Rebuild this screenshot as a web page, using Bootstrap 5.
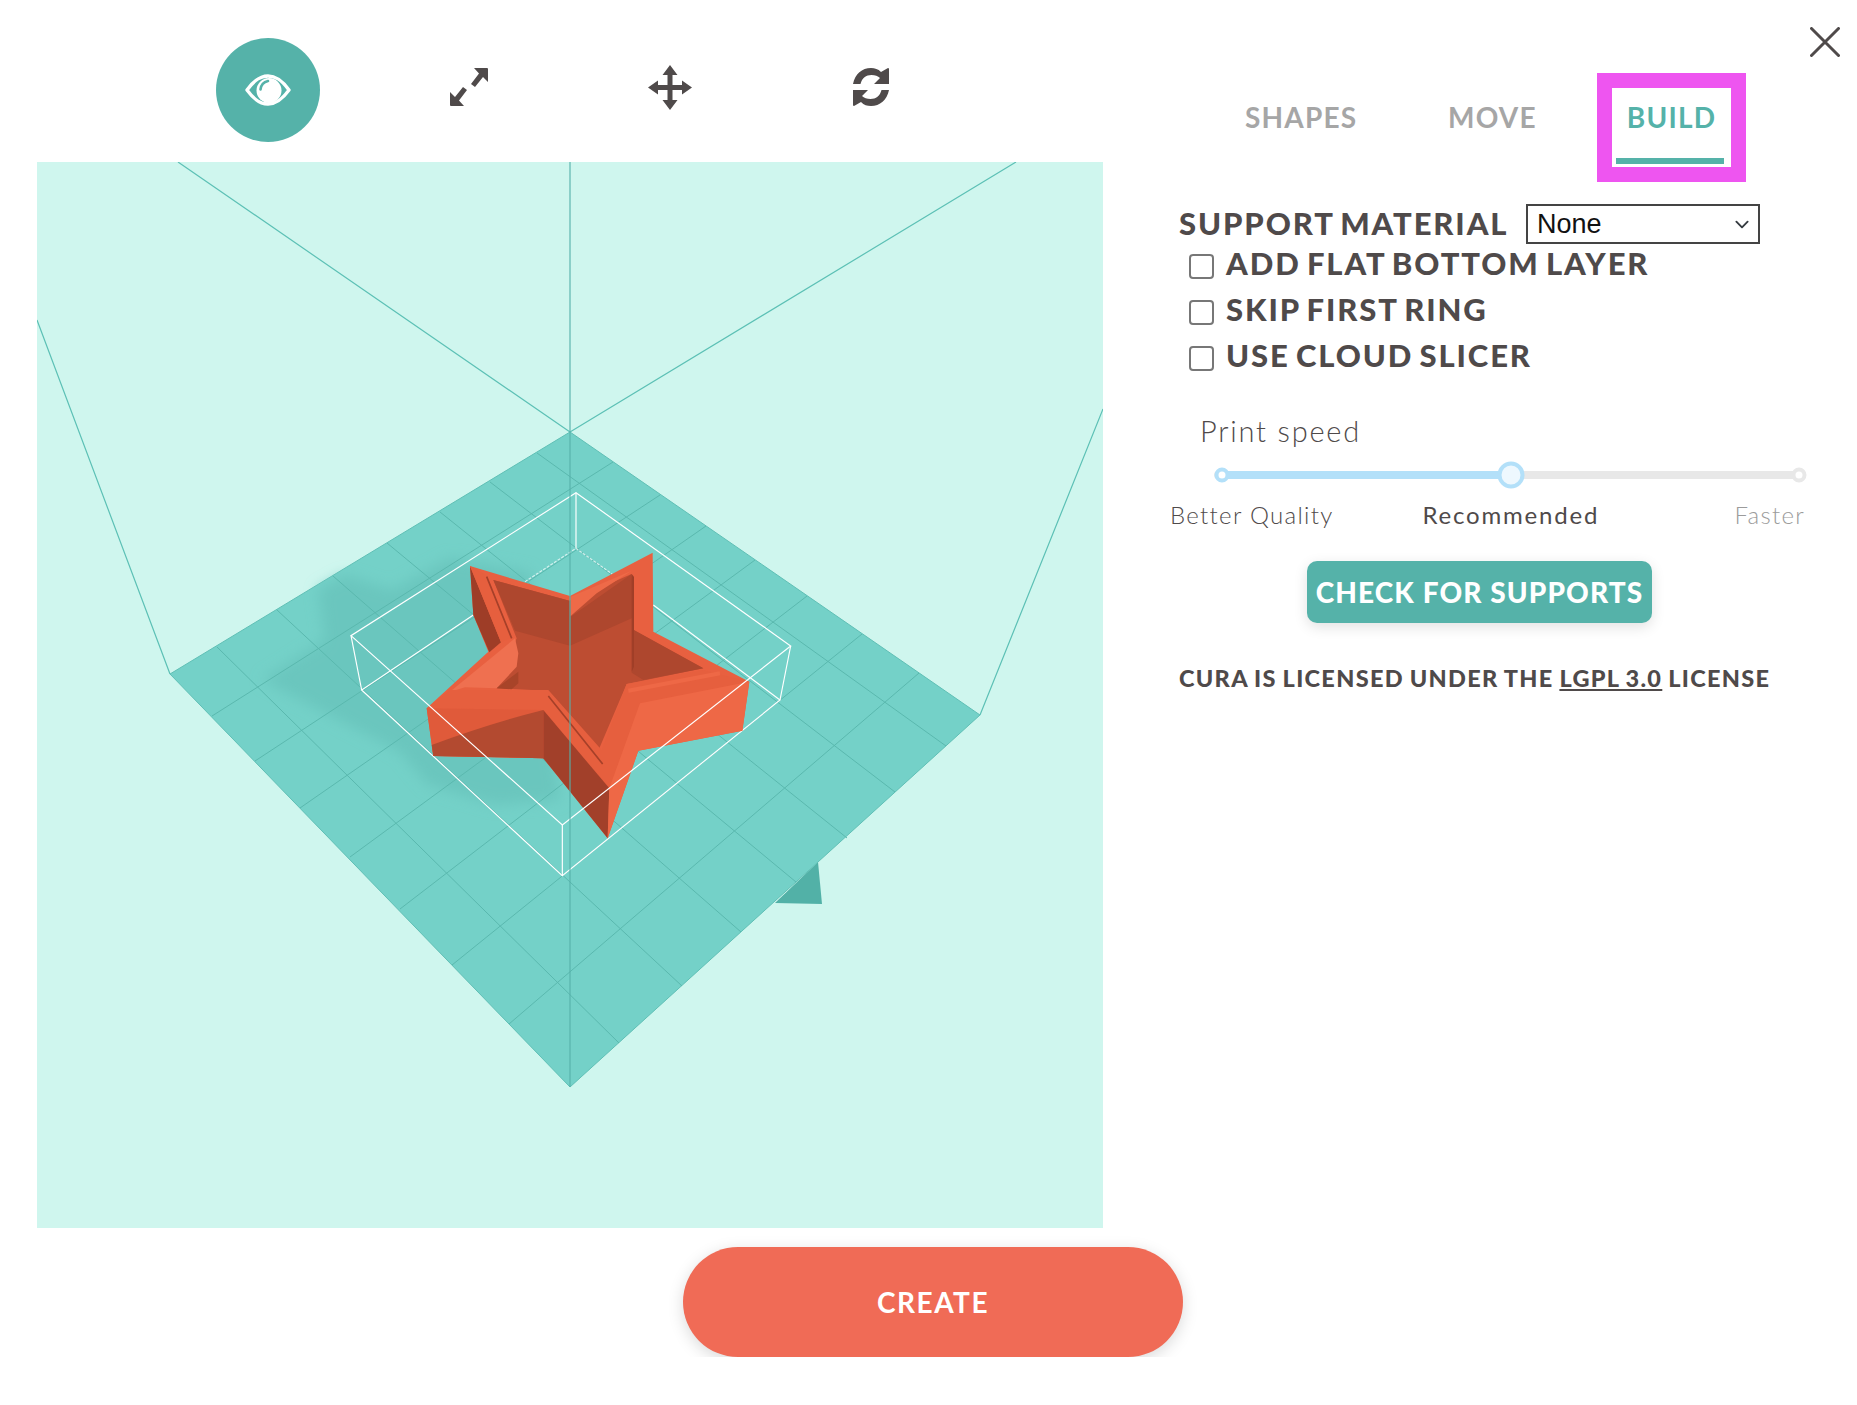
<!DOCTYPE html>
<html lang="en">

<head>
    <meta charset="UTF-8">
    <meta name="viewport" content="width=device-width, initial-scale=1.0">
    <title>Build</title>
    <link href="https://cdn.jsdelivr.net/npm/bootstrap@5.3.0/dist/css/bootstrap.min.css" rel="stylesheet">
    <style>
        body { font-family: Lato, "Liberation Sans", sans-serif; color: #4f4a4a; background: #fff; }
        .left-col { width: 1066px; margin-left: 37px; }
        .tool-row { padding: 38px 0 20px 179px; gap: 97px; }
        .tool-btn { width: 104px; height: 104px; border: 0; padding: 0 0 6px; background: none; }
        .tool-btn.on { background: #55b2a9; padding: 0; }
        .scene { display: block; width: 1066px; height: 1066px; background: #cff6ee; }
        .right-col { margin-left: 76px; width: 640px; }
        .close-x { position: absolute; top: 27px; right: 17px; width: 30px; height: 30px; border: 0; padding: 0; background: none; }
        .tabs { margin-top: 73px; height: 109px; padding-left: 66px; }
        .tab-item { font-size: 28px; font-weight: 700; color: #a6a6a6; padding-top: 27px; line-height: 34px; letter-spacing: 1.200px; }
        .tab-shapes { width: 203px; }
        .tab-move { width: 149px; }
        .tab-build { width: 149px; height: 109px; border: 15px solid #ee55f0; color: #55b2a9; padding: 12px 0 0; text-align: center; position: relative; }
        .tab-build::after { content: ""; position: absolute; left: 4px; right: 7px; bottom: 3px; height: 6px; background: #55b2a9; }
        .big-label { font-size: 31px; font-weight: 900; letter-spacing: 1.900px; word-spacing: -3px; line-height: 36px; white-space: nowrap; }
        .support-row { margin-top: 22px; height: 40px; }
        .support-row .big-label { margin-top: -2px; width: 326px; flex: none; }
        .support-select { width: 234px; height: 40px; margin-left: 21px; border: 2px solid #444; border-radius: 0; padding: 0 0 0 9px; font: 27px "Liberation Sans", sans-serif; color: #111; background-position: right 6px center; background-size: 20px 15px; box-shadow: none; flex: none; }
        .check-list { margin: 10px 0 0 10px; }
        .check-line { height: 46px; gap: 12px; }
        .check-line label { margin-top: -9px; }
        .check-line .form-check-input { width: 25px; height: 25px; margin: 0; border: 2px solid #777; border-radius: 4px; flex: none; }
        .speed-title { margin: 22px 0 0 21px; font-size: 29px; font-weight: 300; letter-spacing: 1.800px; line-height: 34px; }
        .speed-track { position: relative; margin: 23px 0 0 35px; width: 592px; height: 8px; background: #e8e8e8; border-radius: 4px; }
        .speed-fill { position: absolute; left: 8px; top: 0; height: 8px; background: #b3e0f9; }
        .speed-dot { position: absolute; border-radius: 50%; background: #fff; transform: translate(-50%, -50%); top: 4px; }
        .dot-start { left: 8px; width: 15px; height: 15px; border: 4px solid #b3e0f9; }
        .dot-mid { left: 297px; width: 27px; height: 27px; border: 4px solid #b3e0f9; background: #eef8fe; }
        .dot-end { left: 585px; width: 15px; height: 15px; border: 4px solid #e8e8e8; }
        .speed-labels { margin: 21px 0 0 -9px; width: 635px; font-size: 24px; line-height: 30px; letter-spacing: 1.300px; font-weight: 300; }
        .lbl-mid { margin-left: 89px; font-weight: 400; letter-spacing: 1.800px; }
        .lbl-end { margin-left: auto; color: #9b9b9b; }
        .check-btn { display: block; margin: 31px 0 0 128px; width: 345px; height: 62px; border: 0; border-radius: 10px; background: #55b2a9; color: #fff; font-size: 28px; font-weight: 900; letter-spacing: 1.100px; padding: 0; box-shadow: 0 4px 14px rgba(0, 0, 0, .12); white-space: nowrap; }
        .license { margin-top: 40px; font-size: 23.500px; font-weight: 900; letter-spacing: 1.300px; word-spacing: -1px; line-height: 30px; white-space: nowrap; }
        .license a { color: inherit; }
        .create-row { margin-top: 19px; padding-left: 683px; }
        .create-btn { width: 500px; height: 110px; border: 0; border-radius: 55px; background: #f06b56; color: #fff; font-size: 28px; font-weight: 700; letter-spacing: 1.500px; box-shadow: 0 4px 16px rgba(0, 0, 0, .15); }
    </style>
</head>

<body>
    <button class="close-x" aria-label="Close">
        <svg width="30" height="30" viewBox="0 0 30 30"><path d="M1.5 1.5 28.5 28.5M28.5 1.5 1.5 28.5" stroke="#4f4a4a" stroke-width="3" stroke-linecap="round" /></svg>
    </button>

    <div class="d-flex">
        <div class="left-col">
            <div class="d-flex tool-row">
                <button class="tool-btn on rounded-circle d-flex align-items-center justify-content-center" aria-label="View">
                    <svg width="46" height="32" viewBox="0 0 46 32" fill="none" stroke="#fff">
                        <path d="M2 16C10 5 16 2 23 2s13 3 21 14c-8 11-14 14-21 14S10 27 2 16Z" stroke-width="3.400" stroke-linejoin="round" />
                        <circle cx="24" cy="16.500" r="12.500" fill="#fff" stroke="none" />
                        <path d="M15.500 15.500C16 11 18.500 8 23 7" stroke="#55b2a9" stroke-width="2.600" stroke-linecap="round" />
                    </svg>
                </button>
                <button class="tool-btn d-flex align-items-center justify-content-center" aria-label="Scale">
                    <svg width="38" height="38" viewBox="0 0 38 38" fill="#4f4a4a">
                        <path d="M24 0H37a1 1 0 0 1 1 1V14L33 9 25 19 21 16 29 5.500Z" />
                        <path d="M14 38H1a1 1 0 0 1-1-1V24L5 29 13 19 17 22 9 32.500Z" />
                    </svg>
                </button>
                <button class="tool-btn d-flex align-items-center justify-content-center" aria-label="Move">
                    <svg width="44" height="45" viewBox="0 0 44 45" fill="#4f4a4a">
                        <path d="M22 0 29.500 10H24.500V20H34V15.500L44 22.500 34 29.500V25H24.500V35H29.500L22 45 14.500 35H19.500V25H10V29.500L0 22.500 10 15.500V20H19.500V10H14.500Z" />
                    </svg>
                </button>
                <button class="tool-btn d-flex align-items-center justify-content-center" aria-label="Rotate">
                    <svg width="38" height="38" viewBox="0 0 38 38" fill="#4f4a4a">
                        <path id="syncArc" d="M1 16C3 6 10 0 19 0c4 0 7 1 10 4l7-4a1 1 0 0 1 1 1V16H22l6-6c-2-2-5-3-8.500-3C14 7 10 10 8.500 16Z" />
                        <use href="#syncArc" transform="rotate(180 19 19)" />
                    </svg>
                </button>
            </div>

            <svg class="scene" viewBox="37 162 1066 1066" fill="none">
                <!-- room edges -->
                <path d="M570 432 178 162M570 432 1016 162M170 674 37 320M980 715 1103 409" stroke="#5cc0b5" stroke-width="1.200" />
                <path d="M775 903 822 904 818 862Z" fill="#52b1a7" />
                <path d="M570 432 170 674 570 1087 980 715Z" fill="#74d1c8" stroke="#5fbfb5" />
                <defs>
                    <filter id="softShadow" x="-20%" y="-20%" width="140%" height="140%"><feGaussianBlur stdDeviation="7" /></filter>
                </defs>
                <path d="M318 590 345 575 392 590 450 558 530 572 560 800 495 805 428 785 400 752 262 680 325 640Z" fill="#6bc6be" filter="url(#softShadow)" />
                <!-- grid -->
                <path stroke="#5ab8ae" stroke-width="1" d="M537 453 946 746M490 482 895 792M440 512 847 838M387 543 796 882M333 576 741 932M277 610 682 986M217 647 619 1043M613 462 212 716M660 495 255 761M706 526 300 808M755 560 350 857M807 596 400 909M862 634 452 965M919 673 509 1024" />
                <!-- build volume, back part -->
                <g transform="translate(330 480) scale(.33333)" stroke="#fff" stroke-width="3.500">
                    <path d="M738 38V205M1382 498 1350 660M63 467 95 630M697 1035V1187" />
                    <path d="M430 405 95 630 697 1187 1350 660 970 375" />
                    <path d="M585 305 738 205 850 285" stroke-dasharray="9 4" stroke-opacity=".7" />
                </g>
                <!-- star -->
                <g transform="translate(330 480) scale(.33333)">
                    <path fill="#e86040" d="M420 258 720 348 968 218 970 455 1258 605 1237 752 925 812 833 1075 640 835 310 828 290 685 475 515 430 405Z" />
                    <path fill="#9e3d27" d="M420 258 430 405 478 517 513 487Z" />
                    <path fill="#e65f3e" d="M420 258 468 285 548 472 513 487Z" />
                    <path fill="#bd4d32" d="M490 300 718 362 905 282 910 450 1120 565 890 612 808 805 650 632 500 625 560 475Z" />
                    <path fill="#ae472e" d="M490 300 718 362 722 410 905 282 912 412 720 497 555 452Z" />
                    <path fill="#ae472e" d="M912 450 1120 565 940 600 905 578Z" />
                    <path fill="#ee6a48" d="M722 350 905 272 800 340 722 408Z" />
                    <path fill="#a03f28" d="M905 282 912 290 912 560 905 575Z" />
                    <path fill="#ef7050" d="M360 635 555 475 565 520 560 560 500 625 405 622Z" />
                    <path fill="#a84429" d="M500 625 565 575 565 610 545 628Z" />
                    <path fill="#e65f3e" d="M290 685 360 630 655 630 815 810 890 612 1120 570 1258 605 930 670 838 925 640 690Z" />
                    <path fill="#e05a3a" d="M290 685 640 690 640 835 310 828Z" />
                    <path fill="#b34a30" d="M305 795Q480 730 640 690V835L310 828Z" />
                    <path fill="#a2402a" d="M640 690 838 925 833 1075 640 835Z" />
                    <path fill="#ee6846" d="M838 925 930 670 1258 605 1237 752 925 812 833 1075Z" />
                    <path d="M655 648 818 852M470 290 545 475" stroke="#a64029" stroke-width="5" />
                    <path d="M895 632 1170 580" stroke="#ee6846" stroke-width="12" />
                </g>
                <!-- build volume, front part -->
                <g transform="translate(330 480) scale(.33333)" stroke="#fff" stroke-width="3.500">
                    <path d="M738 38 1382 498 697 1035 63 467Z" />
                </g>
                <path d="M570 162V1087" stroke="#55b2a9" stroke-opacity=".75" stroke-width="1.500" />
            </svg>
        </div>

        <div class="right-col">
            <div class="d-flex tabs align-items-start">
                <div class="tab-item tab-shapes">SHAPES</div>
                <div class="tab-item tab-move">MOVE</div>
                <div class="tab-item tab-build">BUILD</div>
            </div>

            <div class="d-flex align-items-center support-row">
                <label class="big-label" for="supportMaterial">SUPPORT MATERIAL</label>
                <select class="form-select support-select" id="supportMaterial">
                    <option>None</option>
                </select>
            </div>

            <div class="check-list">
                <div class="d-flex check-line">
                    <input class="form-check-input" type="checkbox" id="flatBottom">
                    <label class="big-label" for="flatBottom">ADD FLAT BOTTOM LAYER</label>
                </div>
                <div class="d-flex check-line">
                    <input class="form-check-input" type="checkbox" id="skipRing">
                    <label class="big-label" for="skipRing">SKIP FIRST RING</label>
                </div>
                <div class="d-flex check-line">
                    <input class="form-check-input" type="checkbox" id="cloudSlicer">
                    <label class="big-label" for="cloudSlicer">USE CLOUD SLICER</label>
                </div>
            </div>

            <div class="speed-title">Print speed</div>
            <div class="speed-track">
                <div class="speed-fill" style="width: 289px"></div>
                <div class="speed-dot dot-start"></div>
                <div class="speed-dot dot-mid"></div>
                <div class="speed-dot dot-end"></div>
            </div>
            <div class="d-flex speed-labels">
                <span>Better Quality</span>
                <span class="lbl-mid">Recommended</span>
                <span class="lbl-end">Faster</span>
            </div>

            <button class="check-btn">CHECK FOR SUPPORTS</button>
            <div class="license">CURA IS LICENSED UNDER THE <a href="#">LGPL 3.0</a> LICENSE</div>
        </div>
    </div>

    <div class="create-row">
        <button class="create-btn">CREATE</button>
    </div>

    <script src="https://cdn.jsdelivr.net/npm/bootstrap@5.3.0/dist/js/bootstrap.bundle.min.js"></script>
</body>

</html>
